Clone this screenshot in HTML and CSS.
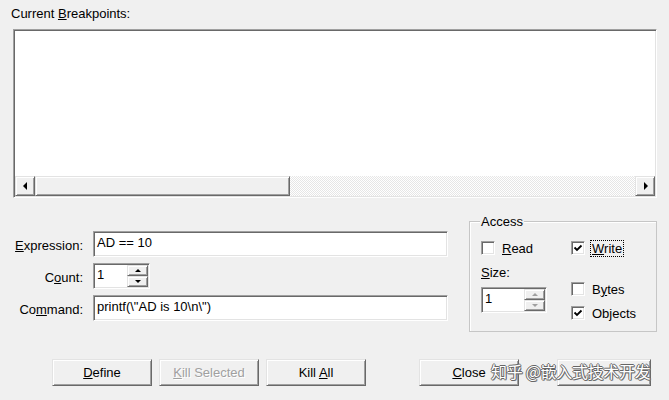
FILE: index.html
```html
<!DOCTYPE html>
<html>
<head>
<meta charset="utf-8">
<link rel="stylesheet" href="styles.css">
</head>
<body>
<div class="dialog">
  <div class="caption">Current <u>B</u>reakpoints:</div>
  <div class="listbox">
    <div class="list-area"></div>
    <div class="hscroll">
      <div class="sb-btn"><span class="tri tri-left"></span></div>
      <div class="sb-thumb"></div>
      <div class="sb-track"></div>
      <div class="sb-btn"><span class="tri tri-right"></span></div>
    </div>
  </div>

  <div class="middle">
    <div class="fields">
      <div class="flabel"><u>E</u>xpression:</div>
      <div class="edit">AD == 10</div>
      <div class="flabel">C<u>o</u>unt:</div>
      <div class="spin count-spin">
        <div class="spin-text">1</div>
        <div class="spin-btns">
          <div class="spin-btn"><span class="tri tri-up"></span></div>
          <div class="spin-btn"><span class="tri tri-down"></span></div>
        </div>
      </div>
      <div class="flabel">Co<u>m</u>mand:</div>
      <div class="edit">printf(\"AD is 10\n\")</div>
    </div>

    <div class="group">
      <span class="legend">Access</span>
      <div class="group-grid">
        <div class="check">
          <span class="box"></span><span class="ctext"><u>R</u>ead</span>
        </div>
        <div class="check">
          <span class="box"><svg width="10" height="10" viewBox="0 0 10 10"><path d="M1.5 4.5 L4 7 L8.5 2.5" fill="none" stroke="#000" stroke-width="1.8"/></svg></span><span class="ctext focus"><u>W</u>rite</span>
        </div>
        <div class="size-col">
          <div class="size-label"><u>S</u>ize:</div>
          <div class="spin size-spin">
            <div class="spin-text">1</div>
            <div class="spin-btns">
              <div class="spin-btn"><span class="tri tri-up dis"></span></div>
              <div class="spin-btn"><span class="tri tri-down dis"></span></div>
            </div>
          </div>
        </div>
        <div class="opt-col">
          <div class="check bytes">
            <span class="box"></span><span class="ctext">B<u>y</u>tes</span>
          </div>
          <div class="check objects">
            <span class="box"><svg width="10" height="10" viewBox="0 0 10 10"><path d="M1.5 4.5 L4 7 L8.5 2.5" fill="none" stroke="#000" stroke-width="1.8"/></svg></span><span class="ctext">Objects</span>
          </div>
        </div>
      </div>
    </div>
  </div>

  <div class="buttons">
    <div class="btn"><span><u>D</u>efine</span></div>
    <div class="btn disabled"><span><u>K</u>ill Selected</span></div>
    <div class="btn"><span>Kill <u>A</u>ll</span></div>
    <div class="btn close"><span><u>C</u>lose</span></div>
    <div class="btn help"></div>
  </div>
  <div class="watermark">知乎 @嵌入式技术开发</div>
</div>
</body>
</html>
```
FILE: styles.css
```css
html, body {
  margin: 0;
  padding: 0;
}
body {
  width: 669px;
  height: 400px;
  overflow: hidden;
  background: #f0f0f0;
  font-family: "Liberation Sans", Arial, sans-serif;
  font-size: 13px;
  line-height: 15px;
  color: #000;
}
u { text-decoration: underline; text-underline-offset: 1px; }

.dialog {
  position: relative;
  height: 400px;
  box-sizing: border-box;
  padding: 6px 0 0 11px;
}
.caption {
  height: 15px;
}
.listbox {
  margin: 8px 0 0 2px;
  width: 644px;
  height: 169px;
  box-sizing: border-box;
  border: 1px solid;
  border-color: #a0a0a0 #ffffff #ffffff #a0a0a0;
  box-shadow: inset 1px 1px #696969, inset -1px -1px #e3e3e3;
  padding: 1px;
  background: #fff;
  display: flex;
  flex-direction: column;
}
.list-area { flex: 1; }
.hscroll {
  height: 20px;
  display: flex;
}
.sb-btn, .sb-thumb, .spin-btn, .btn {
  box-sizing: border-box;
  background: #f0f0f0;
  border: 1px solid;
  border-color: #e3e3e3 #696969 #696969 #e3e3e3;
  box-shadow: inset 1px 1px #ffffff, inset -1px -1px #a0a0a0;
}
.sb-btn {
  width: 20px;
  height: 20px;
  display: flex;
  align-items: center;
  justify-content: center;
}
.sb-thumb {
  width: 255px;
  height: 20px;
}
.sb-track {
  flex: 1;
  background: repeating-conic-gradient(#ffffff 0 25%, #e6e6e6 0 50%) 0 0 / 2px 2px;
}
.tri {
  display: block;
  width: 0;
  height: 0;
  border-style: solid;
  border-color: transparent;
}
.tri-left {
  border-width: 4px 4px 4px 0;
  border-right-color: #000;
  margin-left: -1px;
}
.tri-right {
  border-width: 4px 0 4px 4px;
  border-left-color: #000;
  margin-left: 1px;
}
.tri-up {
  border-width: 0 3px 3px 3px;
  border-bottom-color: #000;
}
.tri-down {
  border-width: 3px 3px 0 3px;
  border-top-color: #000;
}
.tri-up.dis { border-bottom-color: #a0a0a0; }
.tri-down.dis { border-top-color: #a0a0a0; }

.middle {
  display: flex;
  align-items: flex-start;
  margin: 16px 0 0 2px;
}
.fields {
  margin-top: 17px;
  display: grid;
  grid-template-columns: 70px 355px;
  column-gap: 10px;
  row-gap: 6px;
  align-items: center;
}
.flabel {
  text-align: right;
  padding-top: 2px;
}
.edit, .spin {
  box-sizing: border-box;
  height: 26px;
  background: #fff;
  border: 1px solid;
  border-color: #a0a0a0 #ffffff #ffffff #a0a0a0;
  box-shadow: inset 1px 1px #696969, inset -1px -1px #e3e3e3;
  padding: 3px 0 0 3px;
  white-space: nowrap;
  overflow: hidden;
}
.spin {
  display: flex;
  padding: 1px;
}
.spin-text {
  flex: 1;
  padding: 2px 0 0 2px;
}
.count-spin { width: 57px; }
.size-spin { width: 66px; margin-top: 7px; }
.spin-btns {
  width: 21px;
  display: flex;
  flex-direction: column;
}
.spin-btn {
  flex: 1;
  display: flex;
  align-items: center;
  justify-content: center;
}

.group {
  position: relative;
  margin: 7px 0 0 21px;
  width: 188px;
  height: 111px;
  box-sizing: border-box;
  border: 1px solid #c6c6c6;
  box-shadow: inset 1px 1px #ffffff;
  padding: 19px 0 0 11px;
}
.legend {
  position: absolute;
  top: -8px;
  left: 10px;
  padding: 0 1px;
  background: #f0f0f0;
}
.group-grid {
  display: grid;
  grid-template-columns: 90px auto;
  row-gap: 10px;
}
.check {
  display: flex;
  align-items: center;
  height: 14px;
}
.box {
  box-sizing: border-box;
  width: 14px;
  height: 14px;
  background: #fff;
  border: 1px solid;
  border-color: #a0a0a0 #ffffff #ffffff #a0a0a0;
  box-shadow: inset 1px 1px #696969, inset -1px -1px #e3e3e3;
  display: flex;
  align-items: center;
  justify-content: center;
}
.box svg { display: block; }
.ctext {
  margin-left: 5px;
  padding: 0 1px;
  border: 1px solid transparent;
  line-height: 15px;
}
.ctext.focus { border: 1px dotted #000; }
.size-label { height: 15px; }
.opt-col {
  display: flex;
  flex-direction: column;
}
.bytes { margin-top: 17px; }
.objects { margin-top: 10px; }

.buttons {
  display: flex;
  gap: 7px;
  margin: 27px 0 0 41px;
}
.btn {
  width: 100px;
  height: 27px;
  display: flex;
  align-items: center;
  justify-content: center;
  white-space: pre;
}
.btn.disabled {
  color: #a0a0a0;
  text-shadow: 1px 1px #ffffff;
}
.btn.close { margin-left: 46px; }
.btn.help { margin-left: 31px; width: 94px; }

.watermark {
  position: absolute;
  left: 491px;
  top: 360px;
  font-family: "Noto Sans CJK SC", sans-serif;
  font-size: 16px;
  line-height: 22px;
  color: #ffffff;
  letter-spacing: -0.3px;
  text-shadow: 1px 0 #666, -1px 0 #666, 0 1px #666, 0 -1px #666, 1px 1px #888;
}
```
